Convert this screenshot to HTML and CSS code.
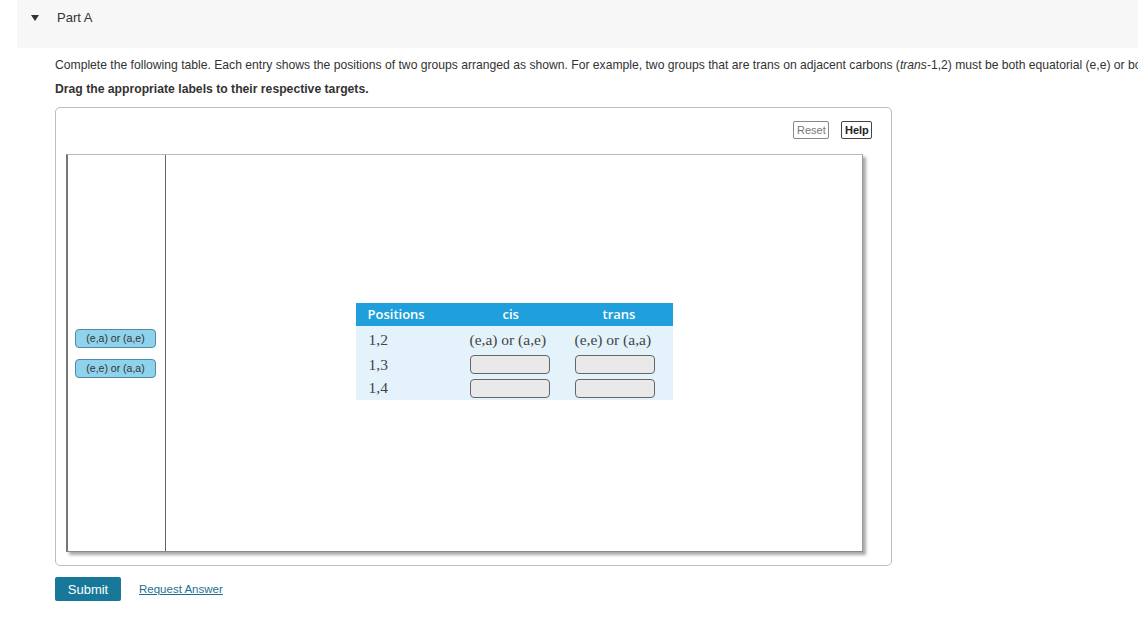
FILE: index.html
```html
<!DOCTYPE html>
<html>
<head>
<meta charset="utf-8">
<link rel="stylesheet" href="styles.css">
</head>
<body>
<div class="page">
  <div class="part-header">
    <span class="caret"></span>
    <span class="part-title">Part A</span>
  </div>
  <div class="content">
    <p class="intro">Complete the following table. Each entry shows the positions of two groups arranged as shown. For example, two groups that are trans on adjacent carbons (<i>trans</i>-1,2) must be both equatorial (e,e) or both axial (a,a).</p>
    <p class="instr">Drag the appropriate labels to their respective targets.</p>
    <div class="dnd-box">
      <div class="toolbar">
        <button class="tb-btn reset">Reset</button>
        <button class="tb-btn help">Help</button>
      </div>
      <div class="panel">
        <div class="labels">
          <div class="label">(e,a) or (a,e)</div>
          <div class="label">(e,e) or (a,a)</div>
        </div>
        <div class="canvas">
          <div class="ctable">
            <div class="th th1">Positions</div>
            <div class="th th2">cis</div>
            <div class="th th3">trans</div>
            <div class="td pos">1,2</div>
            <div class="td">(e,a) or (a,e)</div>
            <div class="td">(e,e) or (a,a)</div>
            <div class="td pos">1,3</div>
            <div class="td"><span class="drop"></span></div>
            <div class="td"><span class="drop"></span></div>
            <div class="td pos">1,4</div>
            <div class="td"><span class="drop"></span></div>
            <div class="td"><span class="drop"></span></div>
          </div>
        </div>
      </div>
    </div>
    <div class="actions">
      <button class="submit">Submit</button>
      <a class="req" href="#">Request Answer</a>
    </div>
  </div>
</div>
</body>
</html>
```
FILE: styles.css
```css
html, body {
  margin: 0;
  padding: 0;
  background: #fff;
  overflow: hidden;
}
.page {
  width: 1138px;
  height: 633px;
  overflow: hidden;
  font-family: "Liberation Sans", Arial, sans-serif;
  color: #333;
}
.part-header {
  margin-left: 17px;
  height: 48px;
  background: #f7f7f7;
  display: flex;
  align-items: flex-start;
  padding-top: 9px;
  box-sizing: border-box;
}
.caret {
  width: 0;
  height: 0;
  border-left: 4px solid transparent;
  border-right: 4px solid transparent;
  border-top: 6px solid #333;
  margin-left: 14px;
  margin-top: 6px;
}
.part-title {
  margin-left: 18px;
  font-size: 13px;
  line-height: 17px;
  color: #333;
}
.content {
  padding-left: 55px;
}
.intro {
  margin: 5px 0 0 0;
  font-size: 12.15px;
  line-height: 24px;
  white-space: nowrap;
  color: #333;
}
.instr {
  margin: 0;
  font-size: 12.2px;
  line-height: 24px;
  font-weight: bold;
  color: #333;
}
.dnd-box {
  margin-top: 6px;
  width: 837px;
  height: 459px;
  box-sizing: border-box;
  border: 1px solid #bdbdbd;
  border-radius: 5px;
  padding: 13px 19px 0 10px;
}
.toolbar {
  display: flex;
  justify-content: flex-end;
  gap: 12px;
  height: 18px;
}
.tb-btn {
  font-family: "Liberation Sans", Arial, sans-serif;
  font-size: 11px;
  height: 18px;
  padding: 0 3px;
  background: #fff;
  border: 1px solid #888;
  border-radius: 2px;
  line-height: 16px;
}
.reset { color: #777; width: 36px; }
.help { color: #222; font-weight: bold; border-color: #444; width: 31px; }
.panel {
  margin-top: 15px;
  width: 797px;
  height: 398px;
  box-sizing: border-box;
  border-top: 1px solid #bbb;
  border-left: 2px solid #777;
  border-right: 1px solid #999;
  border-bottom: 1px solid #888;
  box-shadow: 3px 3px 3px #a8a8a8;
  display: flex;
}
.labels {
  width: 90px;
  flex: none;
  border-right: 1px solid #666;
  display: flex;
  flex-direction: column;
  justify-content: center;
  gap: 11px;
  padding-left: 7px;
  box-sizing: content-box;
}
.label {
  width: 79px;
  height: 17px;
  background: #8fd2eb;
  border: 1px solid #4f8aa6;
  border-radius: 4px;
  font-size: 10.5px;
  line-height: 17px;
  text-align: center;
  color: #333;
}
.canvas {
  flex: 1;
  display: flex;
  align-items: center;
  justify-content: center;
  padding-bottom: 3px;
}
.ctable {
  width: 317px;
  height: 97px;
  background: #e3f2fb;
  display: grid;
  grid-template-columns: 114px 105px 98px;
  grid-template-rows: 23px 27px 23px 24px;
  font-family: "Liberation Serif", "Times New Roman", serif;
}
.th {
  background: #1fa0dc;
  color: #fff;
  font-family: "Open Sans", "Liberation Sans", sans-serif;
  font-weight: 600;
  font-size: 13px;
  line-height: 23px;
}
.th1 { padding-left: 12px; }
.th2 { padding-left: 33px; }
.th3 { padding-left: 28px; }
.td {
  font-size: 15.5px;
  color: #444;
  display: flex;
  align-items: center;
}
.pos { padding-left: 13px; }
.drop {
  display: block;
  width: 78px;
  height: 17px;
  background: #e9e9e9;
  border: 1px solid #666;
  border-radius: 4px;
}
.actions {
  margin-top: 11px;
  display: flex;
  align-items: center;
}
.submit {
  width: 66px;
  height: 24px;
  background: #17789a;
  color: #fff;
  border: none;
  border-radius: 2px;
  font-family: "Liberation Sans", Arial, sans-serif;
  font-size: 13px;
  padding: 0;
}
.req {
  margin-left: 18px;
  font-size: 11.5px;
  color: #1b6f92;
  text-decoration: underline;
}
```
